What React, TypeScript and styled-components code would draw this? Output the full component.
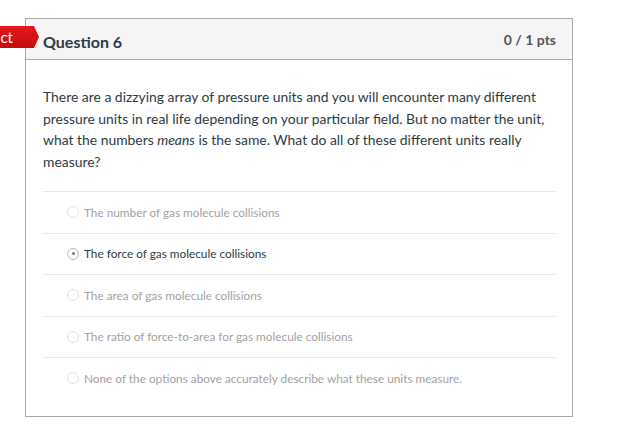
import React from "react";
import styled, { createGlobalStyle } from "styled-components";

const Global = createGlobalStyle`
  html, body { margin: 0; padding: 0; background: #fff; }
  body { font-family: Lato, "Open Sans", sans-serif; }
`;

const Page = styled.div`
  padding: 18px 0 0 25px;
  width: 637px;
  height: 445px;
  box-sizing: border-box;
`;

const Card = styled.div`
  position: relative;
  width: 548px;
  box-sizing: border-box;
  border: 1px solid #a9a9a9;
  background: #fff;
`;

const Header = styled.div`
  display: flex;
  align-items: center;
  justify-content: space-between;
  height: 41px;
  box-sizing: border-box;
  padding: 0 16px 0 17px;
  background: #f5f5f5;
  border-bottom: 1px solid #a9a9a9;
`;

const Title = styled.div`
  font-size: 16px;
  font-weight: 700;
  color: #2d3b45;
  padding-top: 4px;
`;

const Points = styled.div`
  font-size: 14px;
  font-weight: 700;
  color: #555;
  padding-top: 1px;
`;

const Tag = styled.div`
  position: absolute;
  top: 7px;
  right: calc(100% - 13px);
  height: 22px;
  display: flex;
  align-items: center;
  padding: 0 26px 0 10px;
  background: linear-gradient(#e3181d, #c30c10);
  color: #fff;
  font-size: 15px;
  font-weight: 400;
  white-space: nowrap;
  clip-path: polygon(0 0, calc(100% - 5px) 0, 100% 50%, calc(100% - 5px) 100%, 0 100%);
`;

const Body = styled.div`
  padding: 26px 17px 17px 17px;
`;

const QuestionText = styled.p`
  margin: 0 0 19px 0;
  font-size: 13.9px;
  line-height: 21.5px;
  color: #2d3b45;
`;

const AnswerList = styled.div`
  display: flex;
  flex-direction: column;
`;

const AnswerRow = styled.label`
  display: flex;
  align-items: center;
  gap: 5px;
  height: 41.5px;
  box-sizing: border-box;
  padding-left: 24px;
  border-top: 1px solid #e6e6e6;
`;

const Radio = styled.span<{ $checked?: boolean }>`
  width: 10px;
  height: 10px;
  border-radius: 50%;
  border: 1px solid ${(p) => (p.$checked ? "#b8b8b8" : "#e2e2e2")};
  background: #fff;
  display: flex;
  align-items: center;
  justify-content: center;
  &::after {
    content: "";
    display: ${(p) => (p.$checked ? "block" : "none")};
    width: 3px;
    height: 3px;
    border-radius: 50%;
    background: #777;
  }
`;

const AnswerText = styled.span<{ $checked?: boolean }>`
  font-size: 11.8px;
  color: ${(p) => (p.$checked ? "#2d3b45" : "#a2a2a2")};
`;

const answers = [
  "The number of gas molecule collisions",
  "The force of gas molecule collisions",
  "The area of gas molecule collisions",
  "The ratio of force-to-area for gas molecule collisions",
  "None of the options above accurately describe what these units measure.",
];

export default function App() {
  const selected = 1;
  return (
    <>
      <Global />
      <Page>
        <Card>
          <Tag>Incorrect</Tag>
          <Header>
            <Title>Question 6</Title>
            <Points>0 / 1 pts</Points>
          </Header>
          <Body>
            <QuestionText>
              There are a dizzying array of pressure units and you will encounter many different
              pressure units in real life depending on your particular field. But no matter the unit,
              what the numbers <em>means</em> is the same. What do all of these different units really
              measure?
            </QuestionText>
            <AnswerList>
              {answers.map((a, i) => (
                <AnswerRow key={a}>
                  <Radio $checked={i === selected} />
                  <AnswerText $checked={i === selected}>{a}</AnswerText>
                </AnswerRow>
              ))}
            </AnswerList>
          </Body>
        </Card>
      </Page>
    </>
  );
}
